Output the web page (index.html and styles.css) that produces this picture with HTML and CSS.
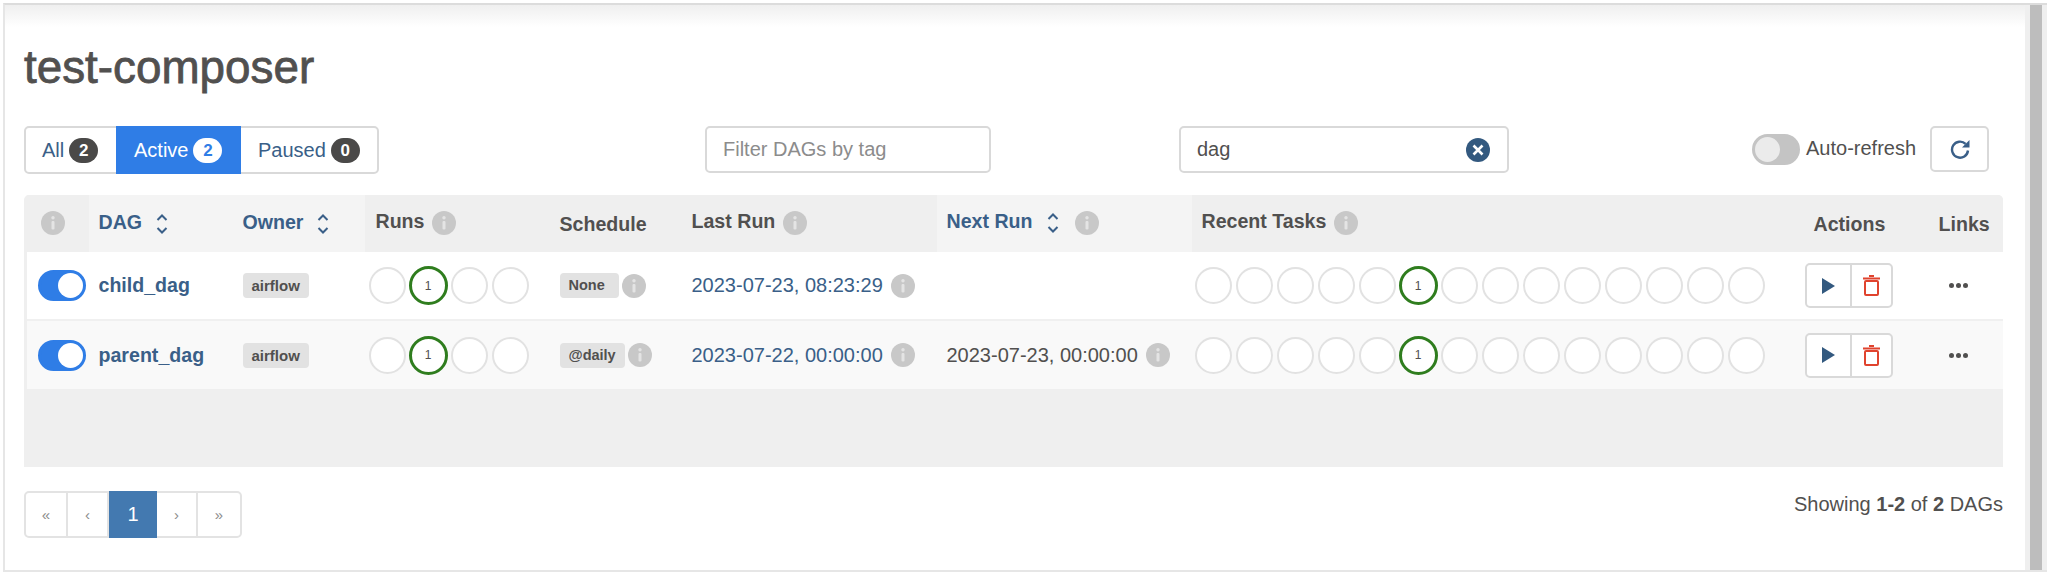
FILE: index.html
```html
<!DOCTYPE html>
<html lang="en">
<head>
    <meta charset="UTF-8">
    <title>DAGs - test-composer</title>
    <link rel="stylesheet" href="styles.css">
</head>
<body>
    <svg class="defs" width="0" height="0">
        <symbol id="i-info" viewBox="0 0 24 24">
            <circle cx="12" cy="12" r="12" fill="#c8c8c8"/>
            <circle cx="12" cy="6.800" r="1.700" fill="#e4e4e4"/>
            <rect x="10.500" y="10" width="3" height="8.500" rx="1" fill="#e4e4e4"/>
        </symbol>
        <symbol id="i-sort" viewBox="0 0 12 20">
            <path d="M1.500 6 6 1.500 10.500 6M1.500 14 6 18.500 10.500 14" fill="none" stroke="currentColor" stroke-width="2"/>
        </symbol>
        <symbol id="i-play" viewBox="0 0 13 16">
            <path d="M0 0 13 8 0 16Z" fill="currentColor"/>
        </symbol>
        <symbol id="i-trash" viewBox="0 0 17 21">
            <path d="M6 1h5M0 3.500h17" stroke="currentColor" stroke-width="2" fill="none"/>
            <rect x="2" y="6" width="13" height="14" rx="1" fill="none" stroke="currentColor" stroke-width="2"/>
        </symbol>
    </svg>

    <div class="window">
        <div class="content">
            <h1 class="title">test-composer</h1>

            <div class="toolbar">
                <div class="status-tabs">
                    <a class="tab tab-all" href="#">All <span class="count">2</span></a>
                    <a class="tab tab-active" href="#">Active <span class="count count-light">2</span></a>
                    <a class="tab tab-paused" href="#">Paused <span class="count">0</span></a>
                </div>
                <div class="field field-tag">Filter DAGs by tag</div>
                <div class="field field-search">
                    <span>dag</span>
                    <svg class="clear-icon" viewBox="0 0 24 24">
                        <circle cx="12" cy="12" r="12" fill="#33597f"/>
                        <path d="M7.500 7.500 16.500 16.500M16.500 7.500 7.500 16.500" stroke="#fff" stroke-width="2.600"/>
                    </svg>
                </div>
                <div class="refresh-group">
                    <span class="switch switch-off"><span class="knob"></span></span>
                    <span class="refresh-label">Auto-refresh</span>
                    <a class="refresh-btn" href="#">
                        <svg viewBox="0 0 20 20" width="20" height="20">
                            <path d="M18 11.500a8 8 0 1 1-2.400-6.600" fill="none" stroke="currentColor" stroke-width="2.400"/>
                            <path d="M19.500 1v7.500h-7.500Z" fill="currentColor"/>
                        </svg>
                    </a>
                </div>
            </div>

            <div class="table-wrap">
                <table class="dag-table">
                    <colgroup>
                        <col class="c-pause"><col class="c-dag"><col class="c-owner"><col class="c-runs"><col class="c-schedule">
                        <col class="c-last"><col class="c-next"><col class="c-tasks"><col class="c-actions"><col class="c-links">
                    </colgroup>
                    <thead>
                        <tr>
                            <th class="th-pause"><svg class="info"><use href="#i-info"/></svg></th>
                            <th class="sortable"><a href="#">DAG</a><svg class="sort"><use href="#i-sort"/></svg></th>
                            <th class="sortable"><a href="#">Owner</a><svg class="sort"><use href="#i-sort"/></svg></th>
                            <th class="th-runs">Runs<svg class="info"><use href="#i-info"/></svg></th>
                            <th class="plain">Schedule</th>
                            <th>Last Run<svg class="info"><use href="#i-info"/></svg></th>
                            <th class="sortable"><a href="#">Next Run</a><svg class="sort"><use href="#i-sort"/></svg><svg class="info info-next"><use href="#i-info"/></svg></th>
                            <th>Recent Tasks<svg class="info"><use href="#i-info"/></svg></th>
                            <th class="plain th-actions">Actions</th>
                            <th class="plain th-links">Links</th>
                        </tr>
                    </thead>
                    <tbody id="dag-rows"></tbody>
                </table>
                <div class="table-empty"></div>
            </div>

            <div class="footer">
                <ul class="pagination">
                    <li class="p-first">«</li>
                    <li class="p-prev">‹</li>
                    <li class="p-page">1</li>
                    <li class="p-next">›</li>
                    <li class="p-last">»</li>
                </ul>
                <p class="showing">Showing <b>1-2</b> of <b>2</b> DAGs</p>
            </div>
        </div>
    </div>
    <div class="gutter"><div class="scrollbar"></div></div>

    <script src="app.js"></script>
</body>
</html>
```

FILE: styles.css
```css
html, body {
    height: 100%;
}
body {
    margin: 0;
    display: flex;
    align-items: flex-start;
    background: #fff;
    font-family: 'Liberation Sans', Arial, sans-serif;
    font-size: 20px;
    color: #51504f;
    overflow: hidden;
}
a {
    color: #3a5f88;
    text-decoration: none;
}
.defs {
    position: absolute;
}
.window {
    flex: none;
    box-sizing: border-box;
    width: 2022px;
    height: 569px;
    margin: 3px 0 0 3px;
    border: 2px solid #e6e6e6;
    border-top-color: #dcdcdc;
    border-right: 0;
    background: linear-gradient(#efefef, #fff 22px);
}
.content {
    padding: 0 0 0 19px;
    width: 1979px;
}
.gutter {
    flex: none;
    box-sizing: border-box;
    width: 22px;
    height: 569px;
    margin-top: 3px;
    border-top: 2px solid #dcdcdc;
    border-bottom: 2px solid #e6e6e6;
}
.scrollbar {
    box-sizing: border-box;
    height: 100%;
    border-left: 5px solid #efefef;
    border-right: 5px solid #efefef;
    background: #bdbdbd;
}
.title {
    margin: 0;
    padding-top: 38px;
    height: 77px;
    font-size: 45.800px;
    line-height: 50px;
    font-weight: normal;
    -webkit-text-stroke: 0.8px #51504f;
}

/* barra de filtros */
.toolbar {
    display: flex;
    align-items: flex-start;
    margin-top: 6px;
    height: 48px;
}
.status-tabs {
    display: flex;
    width: 355px;
    height: 48px;
    box-sizing: border-box;
    border: 2px solid #d9d9d9;
    border-radius: 5px;
}
.tab {
    display: flex;
    align-items: center;
    gap: 5px;
    box-sizing: border-box;
    margin: -2px 0;
    font-size: 20px;
}
.tab-all {
    width: 90px;
    padding-left: 16px;
}
.tab-active {
    width: 125px;
    padding-left: 18px;
    background: #2f7de6;
    color: #fff;
}
.tab-paused {
    padding-left: 17px;
}
.count {
    display: block;
    width: 29px;
    height: 25px;
    border-radius: 13px;
    background: #4a4948;
    color: #fff;
    font-size: 17px;
    font-weight: bold;
    line-height: 25px;
    text-align: center;
}
.count-light {
    background: #fff;
    color: #2f7de6;
}
.field {
    display: flex;
    align-items: center;
    justify-content: space-between;
    box-sizing: border-box;
    height: 47px;
    padding: 0 16px;
    border: 2px solid #d9d9d9;
    border-radius: 5px;
    font-size: 20px;
}
.field-tag {
    width: 286px;
    margin-left: 326px;
    color: #8c8c8c;
}
.field-search {
    width: 330px;
    margin-left: 188px;
    color: #51504f;
}
.clear-icon {
    width: 24px;
    height: 24px;
    margin-right: 1px;
}
.refresh-group {
    display: flex;
    margin-left: 243px;
    align-items: flex-start;
}
.switch {
    display: block;
    box-sizing: border-box;
    width: 48px;
    height: 31px;
    border-radius: 16px;
    border: 3px solid #2f7de6;
    background: #2f7de6;
    flex: none;
}
.knob {
    display: block;
    width: 25px;
    height: 25px;
    margin-left: 17px;
    border-radius: 50%;
    background: #fff;
}
.switch-off {
    margin-top: 8px;
    border-color: #c4c4c4;
    background: #c4c4c4;
}
.switch-off .knob {
    margin-left: 0;
    background: #ebebeb;
}
.refresh-label {
    margin: 10px 0 0 6px;
    width: 124px;
    line-height: 24px;
}
.refresh-btn {
    display: flex;
    align-items: center;
    justify-content: center;
    box-sizing: border-box;
    width: 59px;
    height: 46px;
    border: 2px solid #d9d9d9;
    border-radius: 5px;
}

/* tabela de dags */
.table-wrap {
    margin-top: 21px;
    border-radius: 5px 5px 0 0;
    background: #efefef;
    overflow: hidden;
}
.dag-table {
    table-layout: fixed;
    width: 100%;
    border-collapse: collapse;
}
.c-pause { width: 63px; }
.c-dag { width: 144px; }
.c-owner { width: 132px; }
.c-runs { width: 185px; }
.c-schedule { width: 132px; }
.c-last { width: 255px; }
.c-next { width: 255px; }
.c-tasks { width: 614px; }
.c-actions { width: 125px; }
.c-links { width: 74px; }
th {
    height: 57px;
    padding: 0 0 2px 10px;
    box-sizing: border-box;
    text-align: left;
    font-size: 19.600px;
    white-space: nowrap;
    background: #efefef;
}
th.sortable {
    background: #f4f4f4;
}
th.plain {
    padding-top: 2px;
    padding-bottom: 0;
}
.th-pause {
    padding-left: 15px;
}
.th-runs {
    padding-left: 11px;
}
.th-actions {
    padding-left: 8px;
}
.th-links {
    padding-left: 8px;
}
.info {
    width: 24px;
    height: 24px;
    margin-left: 8px;
    vertical-align: middle;
}
.th-pause .info {
    margin-left: 0;
}
.sort {
    width: 12px;
    height: 20px;
    margin-left: 14px;
    vertical-align: middle;
    color: #3a5f88;
}
.info-next {
    margin-left: 16px;
}
td {
    box-sizing: border-box;
    padding: 0 0 0 10px;
    white-space: nowrap;
    background: #fff;
    border-bottom: 2px solid #f0f0f0;
}
.row-odd td {
    height: 68px;
}
.row-even td {
    height: 69px;
    background: #f9f9f9;
    border-bottom: 0;
}
td:first-child {
    padding-left: 11px;
    border-left: 3px solid #efefef;
}
td:last-child {
    border-right: 3px solid #efefef;
}
.cell-row {
    display: flex;
    align-items: center;
}
.dag-link {
    font-size: 19.600px;
    font-weight: bold;
}
.tag {
    display: inline-block;
    box-sizing: border-box;
    height: 25px;
    border-radius: 4px;
    background: #e2e2e2;
    font-weight: bold;
    line-height: 25px;
}
.tag-owner {
    width: 66px;
    padding: 0 9px;
    font-size: 15px;
}
.tag-schedule {
    min-width: 59px;
    padding: 0 9px;
    font-size: 14.500px;
}
.cell-row .info {
    flex: none;
}
.info-tag {
    margin-left: 3px;
}
.circles {
    display: flex;
    align-items: center;
    margin-left: -6px;
    gap: 4px;
}
.tasks {
    margin-left: -7px;
}
.circle {
    display: flex;
    align-items: center;
    justify-content: center;
    flex: none;
    box-sizing: border-box;
    width: 37px;
    height: 37px;
    border: 2px solid #e2e2e2;
    border-radius: 50%;
    background: #fff;
    font-size: 12px;
}
.circle-on {
    width: 39px;
    height: 39px;
    margin: 0 -1px;
    border: 3px solid #2f7d1e;
}
.action-group {
    display: flex;
    box-sizing: border-box;
    width: 88px;
    height: 45px;
    margin-left: -11px;
    border: 2px solid #d9d9d9;
    border-radius: 5px;
    background: #fff;
}
.action {
    display: flex;
    align-items: center;
    justify-content: center;
    width: 43px;
}
.action + .action {
    flex: 1;
    border-left: 2px solid #d9d9d9;
}
.action-play {
    color: #33597f;
}
.action-delete {
    color: #e0432e;
}
.action-play svg {
    width: 13px;
    height: 16px;
}
.action-delete svg {
    width: 17px;
    height: 21px;
}
.dots {
    display: flex;
    gap: 2px;
    margin-left: 8px;
}
.dots span {
    width: 5px;
    height: 5px;
    border-radius: 50%;
    background: #51504f;
}
.table-empty {
    height: 78px;
}

/* rodape */
.footer {
    display: flex;
    justify-content: space-between;
    margin-top: 24px;
}
.pagination {
    display: flex;
    box-sizing: border-box;
    width: 218px;
    height: 47px;
    margin: 0;
    padding: 0;
    list-style: none;
    border: 2px solid #e3e3e3;
    border-radius: 5px;
}
.pagination li {
    display: flex;
    align-items: center;
    justify-content: center;
    box-sizing: border-box;
    width: 41px;
    margin: -2px 0;
    border-right: 2px solid #e3e3e3;
    color: #8c8c8c;
    font-size: 15px;
}
.pagination .p-first {
    width: 42px;
}
.pagination .p-page {
    width: 48px;
    border-right: 0;
    background: #4379b0;
    color: #fff;
    font-size: 20px;
}
.pagination .p-last {
    flex: 1;
    border-right: 0;
}
.showing {
    margin: 0;
    line-height: 26px;
}
```

FILE: app.js
```js
var dags = [
    { name: 'child_dag', schedule: 'None', lastRun: '2023-07-23, 08:23:29', nextRun: '' },
    { name: 'parent_dag', schedule: '@daily', lastRun: '2023-07-22, 00:00:00', nextRun: '2023-07-23, 00:00:00' }
];

function info(extra) {
    return '<svg class="info ' + (extra || '') + '"><use href="#i-info"/></svg>';
}

function circles(total, on) {
    var html = '';
    for (var i = 0; i < total; i++) {
        html += i === on ? '<span class="circle circle-on">1</span>' : '<span class="circle"></span>';
    }
    return html;
}

document.getElementById('dag-rows').innerHTML = dags.map(function (dag, index) {
    return '<tr class="' + (index % 2 ? 'row-even' : 'row-odd') + '">' +
        '<td><span class="switch"><span class="knob"></span></span></td>' +
        '<td><a class="dag-link" href="#">' + dag.name + '</a></td>' +
        '<td><span class="tag tag-owner">airflow</span></td>' +
        '<td><div class="circles">' + circles(4, 1) + '</div></td>' +
        '<td><div class="cell-row"><span class="tag tag-schedule">' + dag.schedule + '</span>' + info('info-tag') + '</div></td>' +
        '<td><div class="cell-row"><a href="#">' + dag.lastRun + '</a>' + info() + '</div></td>' +
        '<td>' + (dag.nextRun ? '<div class="cell-row">' + dag.nextRun + info() + '</div>' : '') + '</td>' +
        '<td><div class="circles tasks">' + circles(14, 5) + '</div></td>' +
        '<td><div class="action-group">' +
            '<a class="action action-play" href="#"><svg><use href="#i-play"/></svg></a>' +
            '<a class="action action-delete" href="#"><svg><use href="#i-trash"/></svg></a>' +
        '</div></td>' +
        '<td><div class="dots"><span></span><span></span><span></span></div></td>' +
        '</tr>';
}).join('');
```
